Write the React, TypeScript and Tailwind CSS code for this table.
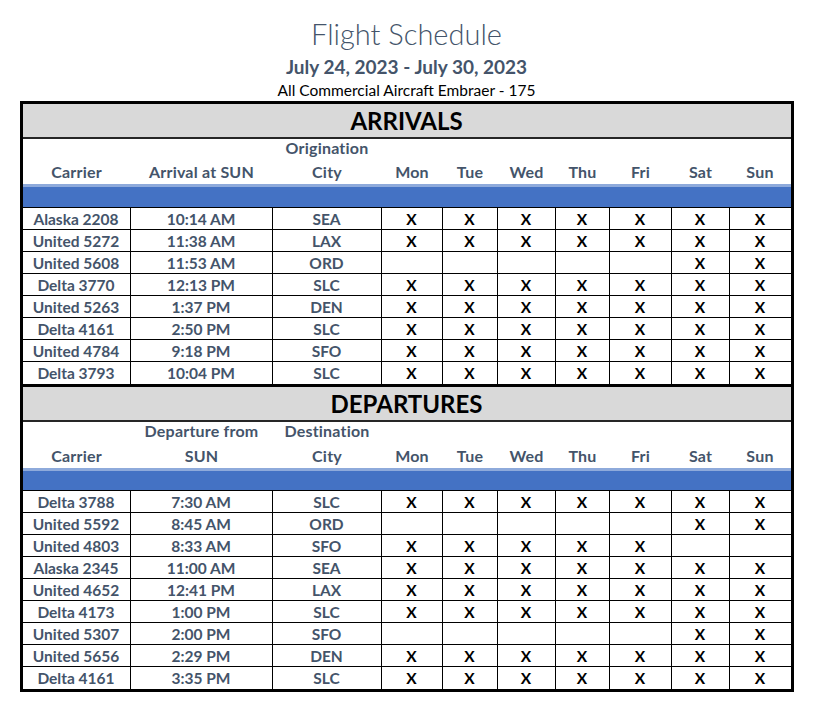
import React from "react";

type Row = [string, string, string, number[]];

const ALL = [1, 1, 1, 1, 1, 1, 1];
const WE = [0, 0, 0, 0, 0, 1, 1];
const WD = [1, 1, 1, 1, 1, 0, 0];

const arrivals: Row[] = [
  ["Alaska 2208", "10:14 AM", "SEA", ALL],
  ["United 5272", "11:38 AM", "LAX", ALL],
  ["United 5608", "11:53 AM", "ORD", WE],
  ["Delta 3770", "12:13 PM", "SLC", ALL],
  ["United 5263", "1:37 PM", "DEN", ALL],
  ["Delta 4161", "2:50 PM", "SLC", ALL],
  ["United 4784", "9:18 PM", "SFO", ALL],
  ["Delta 3793", "10:04 PM", "SLC", ALL],
];

const departures: Row[] = [
  ["Delta 3788", "7:30 AM", "SLC", ALL],
  ["United 5592", "8:45 AM", "ORD", WE],
  ["United 4803", "8:33 AM", "SFO", WD],
  ["Alaska 2345", "11:00 AM", "SEA", ALL],
  ["United 4652", "12:41 PM", "LAX", ALL],
  ["Delta 4173", "1:00 PM", "SLC", ALL],
  ["United 5307", "2:00 PM", "SFO", WE],
  ["United 5656", "2:29 PM", "DEN", ALL],
  ["Delta 4161", "3:35 PM", "SLC", ALL],
];

const DAYS = ["Mon", "Tue", "Wed", "Thu", "Fri", "Sat", "Sun"];
const GRID =
  "grid grid-cols-[108px_142px_109px_61px_55px_58px_54px_62px_58px_61px]";

function Band({ title, h }: { title: string; h: string }) {
  return (
    <div
      className={`${h} bg-[#d9d9d9] border-b-2 border-[#262626] flex items-center justify-center text-[24px] font-bold text-black leading-none`}
    >
      {title}
    </div>
  );
}

function HeadCell({ top, bottom }: { top: string; bottom: string }) {
  return (
    <div className="flex flex-col justify-between items-center pb-[1px] overflow-hidden">
      <div className="h-[18px] leading-[18px] whitespace-nowrap">{top}</div>
      <div className="h-[22px] leading-[22px] whitespace-nowrap">{bottom}</div>
    </div>
  );
}

function Header({ top, bottom, h }: { top: [string, string]; bottom: [string, string]; h: string }) {
  return (
    <div className={`${GRID} ${h} bg-white text-[#44546a] font-bold text-[16px] tracking-[0.2px]`}>
      <HeadCell top="" bottom="Carrier" />
      <HeadCell top={top[0]} bottom={bottom[0]} />
      <HeadCell top={top[1]} bottom={bottom[1]} />
      {DAYS.map((d) => (
        <HeadCell key={d} top="" bottom={d} />
      ))}
    </div>
  );
}

function Strip({ blue }: { blue: string }) {
  return (
    <div className="border-b border-black">
      <div className="h-[3px] bg-[#8eaadb]" />
      <div className={`${blue} bg-[#4472c4]`} />
    </div>
  );
}

function DataRows({ rows, lastBorder }: { rows: Row[]; lastBorder: string }) {
  return (
    <div>
      {rows.map((r, i) => {
        const last = i === rows.length - 1;
        return (
          <div
            key={i}
            className={`${GRID} ${last ? lastBorder : "h-[22px] border-b border-black"} font-bold text-[15.5px]`}
          >
            {[r[0], r[1], r[2]].map((t, j) => (
              <div
                key={j}
                className="border-r border-black flex items-center justify-center pt-[2px] text-[#44546a] leading-none"
              >
                {t}
              </div>
            ))}
            {r[3].map((x, j) => (
              <div
                key={j}
                className={`${j < 6 ? "border-r border-black" : ""} flex items-center justify-center pt-[2px] text-black leading-none`}
              >
                {x ? "X" : ""}
              </div>
            ))}
          </div>
        );
      })}
    </div>
  );
}

export default function App() {
  return (
    <div
      className="w-[813px] h-[715px] bg-white"
      style={{ fontFamily: "Lato, 'Open Sans', 'Liberation Sans', sans-serif" }}
    >
      <div className="flex flex-col items-center">
        <div className="mt-[17px] h-[34px] leading-[34px] text-[29px] font-light text-[#44546a]">
          Flight Schedule
        </div>
        <div className="mt-[4px] h-[24px] leading-[24px] text-[19px] font-bold text-[#44546a]">
          July 24, 2023 - July 30, 2023
        </div>
        <div className="mt-[2px] h-[18px] leading-[18px] text-[15.5px] text-black">
          All Commercial Aircraft Embraer - 175
        </div>
      </div>
      <div className="mt-[2px] mx-auto w-[774px] border-[3px] border-black">
        <Band title="ARRIVALS" h="h-[35px]" />
        <Header top={["", "Origination"]} bottom={["Arrival at SUN", "City"]} h="h-[45px]" />
        <Strip blue="h-[20px]" />
        <DataRows rows={arrivals} lastBorder="h-[25px] border-b-[3px] border-black" />
        <Band title="DEPARTURES" h="h-[35px]" />
        <Header top={["Departure from", "Destination"]} bottom={["SUN", "City"]} h="h-[46px]" />
        <Strip blue="h-[19px]" />
        <DataRows rows={departures} lastBorder="h-[22px]" />
      </div>
    </div>
  );
}
